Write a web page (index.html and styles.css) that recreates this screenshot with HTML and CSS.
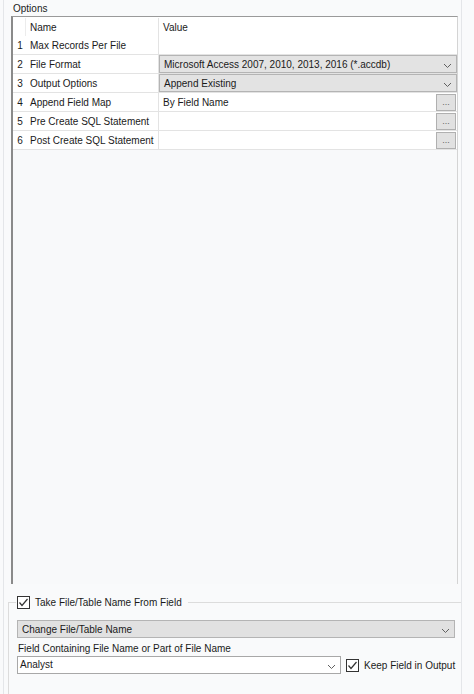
FILE: index.html
```html
<!DOCTYPE html>
<html lang="en">
<head>
    <meta charset="UTF-8">
    <title>Output Options</title>
    <link rel="stylesheet" href="styles.css">
</head>
<body>
    <div class="panel">
        <!-- 옵션 그리드 -->
        <div class="cap">Options</div>
        <div class="grid">
            <div class="row head">
                <span class="num"></span>
                <span class="name">Name</span>
                <span class="val">Value</span>
            </div>
            <div class="row">
                <span class="num">1</span>
                <span class="name">Max Records Per File</span>
                <span class="val"></span>
            </div>
            <div class="row">
                <span class="num">2</span>
                <span class="name">File Format</span>
                <span class="val"><span class="combo">Microsoft Access 2007, 2010, 2013, 2016 (*.accdb)<svg class="chev" width="9" height="6" viewBox="0 0 9 6"><polyline points="1,1 4.5,4.5 8,1" fill="none" stroke="#606060" stroke-width="1"/></svg></span></span>
            </div>
            <div class="row">
                <span class="num">3</span>
                <span class="name">Output Options</span>
                <span class="val"><span class="combo">Append Existing<svg class="chev" width="9" height="6" viewBox="0 0 9 6"><polyline points="1,1 4.5,4.5 8,1" fill="none" stroke="#606060" stroke-width="1"/></svg></span></span>
            </div>
            <div class="row">
                <span class="num">4</span>
                <span class="name">Append Field Map</span>
                <span class="val">By Field Name<span class="dots">...</span></span>
            </div>
            <div class="row">
                <span class="num">5</span>
                <span class="name">Pre Create SQL Statement</span>
                <span class="val"><span class="dots">...</span></span>
            </div>
            <div class="row">
                <span class="num">6</span>
                <span class="name">Post Create SQL Statement</span>
                <span class="val"><span class="dots">...</span></span>
            </div>
            <div class="empty"></div>
        </div>

        <!-- 필드에서 파일명 가져오기 -->
        <div class="group">
            <div class="legend">
                <span class="chk"><svg width="11" height="11" viewBox="0 0 11 11"><polyline points="1.5,5.5 4,8.5 9.5,2" fill="none" stroke="#333" stroke-width="1.2"/></svg></span>
                Take File/Table Name From Field
            </div>
            <div class="combo wide">Change File/Table Name<svg class="chev" width="9" height="6" viewBox="0 0 9 6"><polyline points="1,1 4.5,4.5 8,1" fill="none" stroke="#606060" stroke-width="1"/></svg></div>
            <div class="lbl">Field Containing File Name or Part of File Name</div>
            <div class="line">
                <div class="input">Analyst<svg class="chev" width="9" height="6" viewBox="0 0 9 6"><polyline points="1,1 4.5,4.5 8,1" fill="none" stroke="#606060" stroke-width="1"/></svg></div>
                <span class="chk"><svg width="11" height="11" viewBox="0 0 11 11"><polyline points="1.5,5.5 4,8.5 9.5,2" fill="none" stroke="#333" stroke-width="1.2"/></svg></span>
                <span>Keep Field in Output</span>
            </div>
        </div>
    </div>
</body>
</html>
```

FILE: styles.css
```css
html,
body {
    margin: 0;
    padding: 0;
    height: 100%;
}

body {
    background: #f9fafb;
    font-family: "Liberation Sans", Arial, sans-serif;
    font-size: 10px;
    color: #1a1a1a;
    white-space: nowrap;
    overflow: hidden;
}

/* 바깥 패널 */
.panel {
    margin-left: 3px;
    width: 459px;
    height: 100%;
    border-left: 1px solid #e4e6e9;
    border-right: 1px solid #e4e6e9;
    box-sizing: border-box;
}

.cap {
    height: 16px;
    line-height: 17px;
    padding-left: 9px;
}

/* 그리드 */
.grid {
    margin-left: 7px;
    width: 447px;
    height: 568px;
    border-left: 2px solid #8a8a8a;
    border-top: 1px solid #9a9a9a;
    border-right: 1px solid #d4d4d4;
    display: flex;
    flex-direction: column;
    box-sizing: border-box;
}

.row {
    display: grid;
    grid-template-columns: 13px 133px 1fr;
    height: 19px;
    background: #fff;
    border-bottom: 1px solid #e3e3e3;
    box-sizing: border-box;
}

.row.head {
    border-bottom: 0;
    padding-top: 1px;
}

.row span.num,
.row span.name,
.row span.val {
    display: flex;
    align-items: center;
}

.num {
    justify-content: center;
    padding-left: 1px;
}

.head .num {
    border-right: 1px solid #ececec;
}

.name {
    padding-left: 4px;
    border-right: 1px solid #e3e3e3;
}

.val {
    position: relative;
    padding-left: 4px;
}

/* 콤보박스 */
.combo {
    position: absolute;
    left: 0;
    right: 0;
    top: 0;
    bottom: 0;
    display: flex;
    align-items: center;
    padding-left: 4px;
    background: #e3e3e3;
    border: 1px solid #b4b4b4;
}

.chev {
    position: absolute;
    right: 4px;
    top: 7px;
}

/* ... 버튼 */
.dots {
    position: absolute;
    right: 1px;
    top: 1px;
    width: 18px;
    height: 15px;
    background: #e1e1e1;
    border: 1px solid #b0b0b0;
    font-size: 9px;
    color: #666;
    text-align: center;
    line-height: 14px;
}

.empty {
    flex: 1;
    background: #f8f9fa;
}

/* 그룹박스 */
.group {
    margin: 18px 0 0 4px;
    border: 1px solid #dcdcdc;
    border-right: 0;
    border-bottom: 0;
    height: 100px;
    padding: 0 6px 0 8px;
}

.legend {
    display: flex;
    align-items: center;
    gap: 5px;
    margin: -7px 0 0 -1px;
    padding: 0 6px 0 1px;
    background: #f9fafb;
    width: max-content;
    height: 13px;
}

.chk {
    display: inline-block;
    flex-shrink: 0;
    width: 11px;
    height: 11px;
    border: 1px solid #333;
    background: #fff;
}

.chk svg {
    display: block;
}

.combo.wide {
    position: relative;
    height: 18px;
    margin-top: 11px;
    box-sizing: border-box;
    background: #e1e1e1;
}

.lbl {
    margin-top: 3px;
    height: 15px;
    line-height: 16px;
    padding-left: 1px;
}

.line {
    display: flex;
    align-items: center;
    gap: 5px;
}

.input {
    position: relative;
    flex-shrink: 0;
    width: 324px;
    height: 18px;
    line-height: 16px;
    padding-left: 2px;
    background: #fff;
    border: 1px solid #a8a8a8;
    box-sizing: border-box;
}
```
